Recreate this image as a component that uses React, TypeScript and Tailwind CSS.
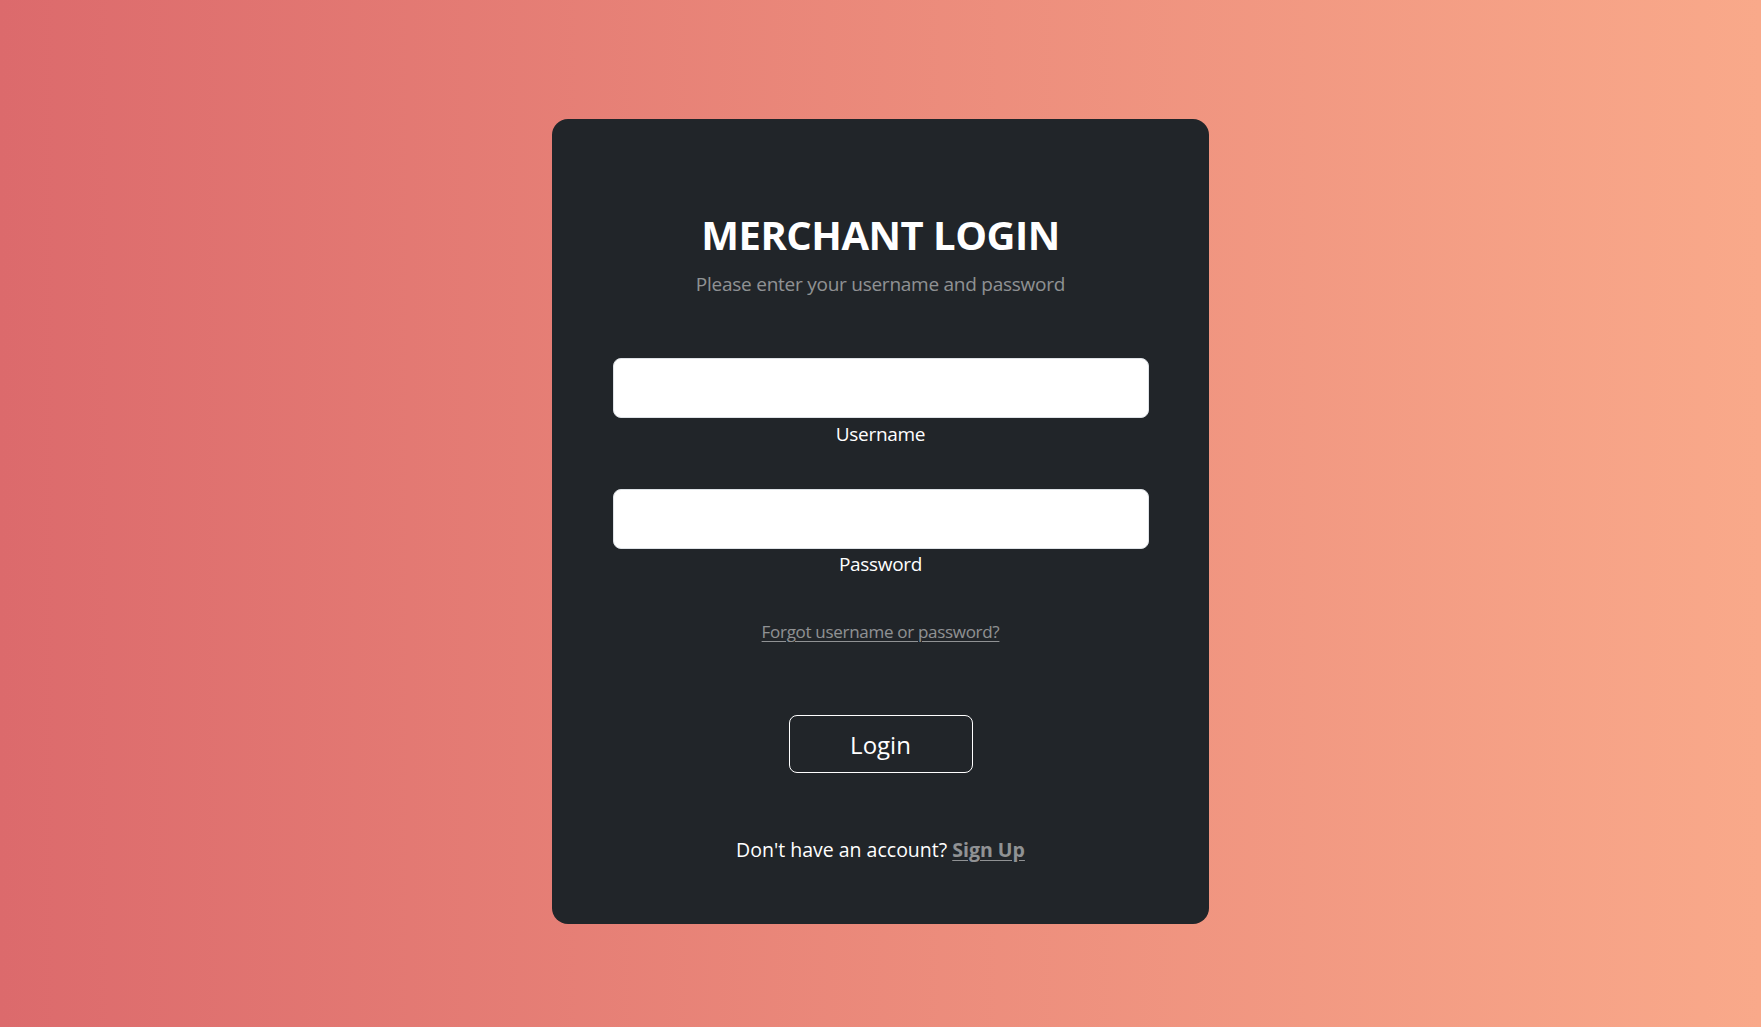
import React from "react";

export default function App() {
  return (
    <div className="min-h-screen w-full bg-linear-to-r from-[#dc6a6c] to-[#f9a98a] flex justify-center pt-[119px] font-['Open_Sans','Noto_Sans',sans-serif]">
      <div className="w-[657px] h-[805px] rounded-[16px] bg-[#212529] flex flex-col items-center pt-[96px]">
        <h1 className="text-[40px] leading-[40px] font-bold text-white tracking-[-0.5px]">MERCHANT LOGIN</h1>
        <p className="mt-[19px] text-[19px] leading-[20px] text-white/50 tracking-[-0.25px]">Please enter your username and password</p>

        <input
          type="text"
          className="mt-[64px] w-[536px] h-[60px] rounded-[8px] bg-white border border-[#dee2e6] px-4 text-[20px] outline-none"
        />
        <label className="mt-[6px] text-[19px] leading-[20px] text-white tracking-[-0.3px]">Username</label>

        <input
          type="password"
          className="mt-[45px] w-[536px] h-[60px] rounded-[8px] bg-white border border-[#dee2e6] px-4 text-[20px] outline-none"
        />
        <label className="mt-[5px] text-[19px] leading-[20px] text-white tracking-[-0.3px]">Password</label>

        <a href="#" className="mt-[49px] text-[17px] leading-[18px] text-white/50 underline underline-offset-[3px] tracking-[-0.3px]">
          Forgot username or password?
        </a>

        <button className="mt-[74px] w-[184px] h-[58px] rounded-[8px] border border-white text-white text-[24px] leading-none pt-[1px]">
          Login
        </button>

        <p className="mt-[67px] text-[19.5px] leading-[20px] text-white">
          Don't have an account?{" "}
          <a href="#" className="font-bold text-white/50 underline underline-offset-[3px]">Sign Up</a>
        </p>
      </div>
    </div>
  );
}
